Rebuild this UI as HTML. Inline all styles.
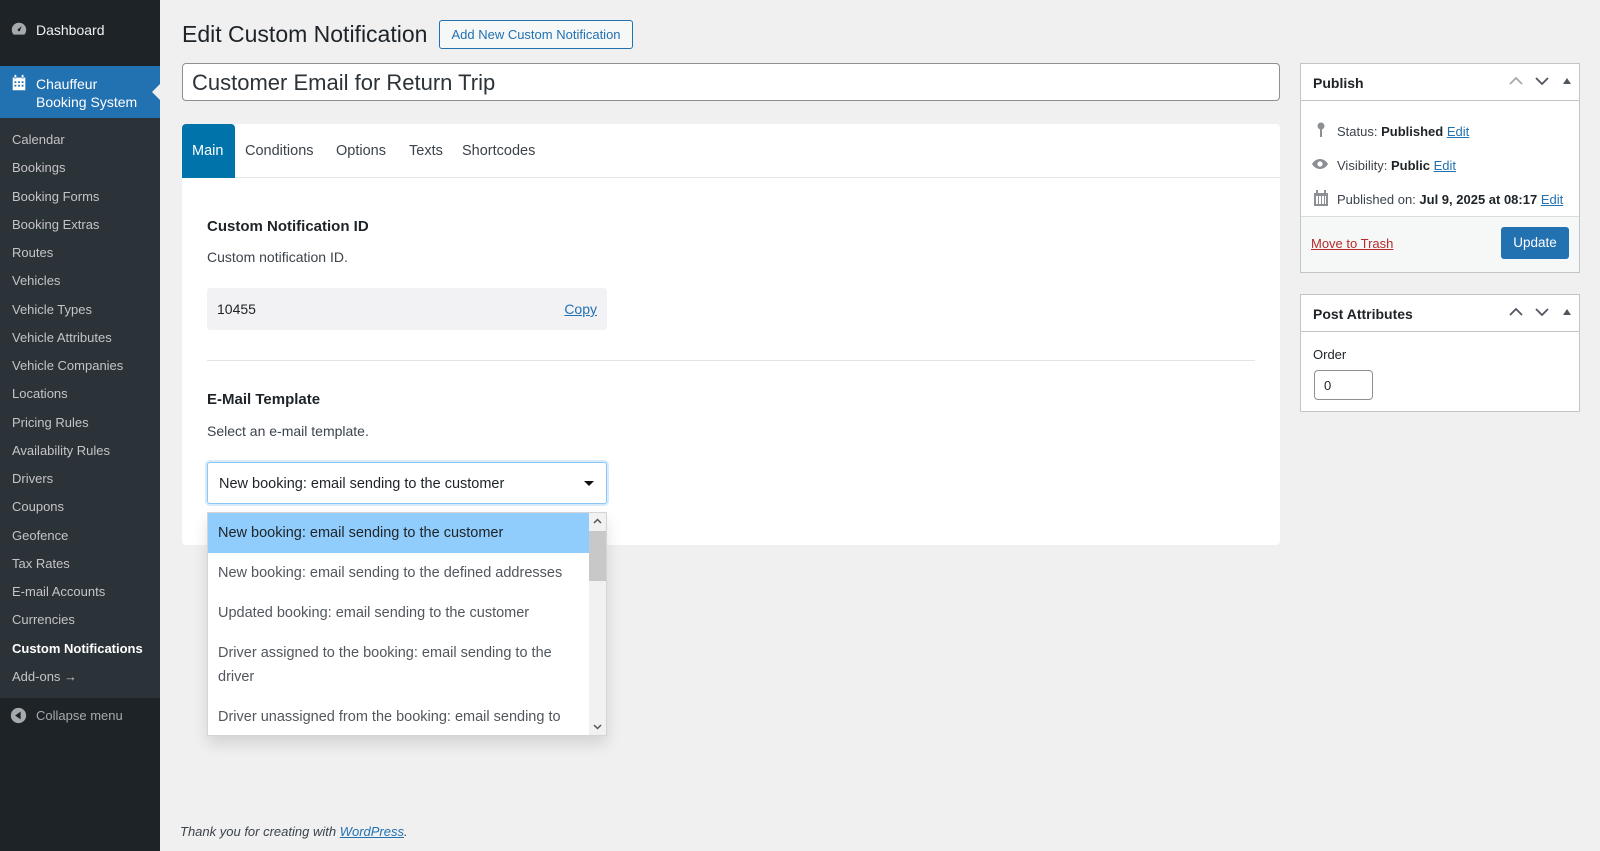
<!DOCTYPE html>
<html><head><meta charset="utf-8"><style>
*{box-sizing:border-box;margin:0;padding:0}
body{width:1600px;height:851px;background:#f0f0f1;font-family:"Liberation Sans",sans-serif;font-size:13px;color:#1d2327;position:relative;overflow:hidden}
.sb{position:absolute;left:0;top:0;width:160px;height:851px;background:#1d2327}
.dash{position:absolute;left:0;top:16px;height:28px;width:160px;color:#f0f0f1;font-size:14px}
.dash span{position:absolute;left:36px;top:6px}
.cbs{position:absolute;left:0;top:66px;width:160px;height:52px;background:#2271b1;color:#fff;font-size:14px;line-height:18px}
.cbs span{position:absolute;left:36px;top:9px}
.cbs:after{content:"";position:absolute;right:0;top:18px;border:8px solid transparent;border-right-color:#f0f0f1}
.sub{position:absolute;left:0;top:118px;width:160px;height:580px;background:#2c3338;padding-top:8px}
.sub div{height:28.26px;line-height:28px;padding-left:12px;color:#c3c4c7;font-size:13px}
.sub .cur{color:#fff;font-weight:bold}
.col{position:absolute;left:36px;top:708px;color:#a7aaad;font-size:13px}
h1{position:absolute;left:182px;top:21px;font-size:23px;font-weight:400;color:#1d2327}
.btn{position:absolute;left:439px;top:20px;width:194px;height:29px;border:1px solid #2271b1;border-radius:3px;color:#2271b1;font-size:13px;text-align:center;line-height:27px;background:#f6f7f7}
.title{position:absolute;left:182px;top:63px;width:1098px;height:38px;border:1px solid #8c8f94;border-radius:4px;background:#fff;font-size:22px;padding:6px 9px;line-height:26px;color:#2c3338}
.panel{position:absolute;left:182px;top:124px;width:1098px;height:421px;background:#fff;border-radius:4px}
.tabs{height:54px;border-bottom:1px solid #e8e8e8;position:relative;font-size:14.5px;color:#3c434a}
.tabs span{position:absolute;top:19px}
.tabs .m{left:0;top:0;width:53px;height:54px;background:#0073aa;color:#fff;border-radius:4px 4px 0 0;padding:19px 0 0 10px}
.h{position:absolute;font-size:15px;font-weight:bold;left:25px}
.d{position:absolute;font-size:14px;left:25px;color:#3c434a}
.idb{position:absolute;left:25px;top:164px;width:400px;height:42px;background:#f2f2f4;border-radius:3px;font-size:14px;padding:13px 10px}
.idb a{position:absolute;right:10px;top:13px;color:#2271b1;text-decoration:underline}
.hr{position:absolute;left:25px;top:236px;width:1048px;height:1px;background:#e4e4e4}
.sel{position:absolute;left:207px;top:462px;width:400px;height:42px;border:1px solid #8cc6f7;box-shadow:0 0 0 2px #d7ebfc;border-radius:3px;background:#fff;font-size:14.5px;padding:13px 11px}
.sel:after{content:"";position:absolute;right:12px;top:18px;border:5px solid transparent;border-top:5px solid #111;border-bottom:0}
.dd{position:absolute;left:207px;top:512px;width:400px;height:224px;background:#fff;border:1px solid #d4d4d8;box-shadow:0 8px 14px rgba(0,0,0,.12);overflow:hidden;font-size:14.5px;color:#50575e}
.dd .t{padding:0 24px 0 10px;line-height:24px}
.dd .o{height:40px;padding-top:8px}
.dd .hl{background:#90cdfc;color:#1d2327}
.sc{position:absolute;right:0;top:0;width:17px;height:222px;background:#f1f1f1}
.sc i{position:absolute;left:0;top:18px;width:17px;height:50px;background:#c8c8c8}
.box{position:absolute;left:1300px;width:280px;background:#fff;border:1px solid #c3c4c7}
.bh{height:37px;border-bottom:1px solid #c3c4c7;font-size:14px;font-weight:bold;padding:11px 12px;position:relative}
.bh svg{position:absolute;top:12px}
.row{position:absolute;left:36px;font-size:13px;color:#3c434a}
.row b{color:#1d2327}
a.l{color:#2271b1;text-decoration:underline}
.foot{position:absolute;left:180px;top:824px;font-style:italic;font-size:13px;color:#3c434a}
</style></head><body>
<div class="sb">
<div class="dash"><svg style="position:absolute;left:10px;top:4px" width="18" height="18" viewBox="0 0 20 20"><path fill="#a7aaad" d="M10 3a8 8 0 0 0-8 8c0 2 .7 3.8 2 5.2h12a8 8 0 0 0 2-5.2 8 8 0 0 0-8-8zm0 9.5a1.5 1.5 0 1 1 0-3l3-3-1.6 4.3A1.5 1.5 0 0 1 10 12.5z"/></svg><span>Dashboard</span></div>
<div class="cbs"><svg style="position:absolute;left:10px;top:8px" width="18" height="18" viewBox="0 0 20 20"><path fill="#fff" d="M3 4h14v14H3zM5 1h2v4H5zM13 1h2v4h-2zM5 8v2h2V8zm4 0v2h2V8zm4 0v2h2V8zM5 12v2h2v-2zm4 0v2h2v-2zm4 0v2h2v-2z" fill-rule="evenodd"/></svg><span>Chauffeur<br>Booking System</span></div>
<div class="sub">
<div>Calendar</div><div>Bookings</div><div>Booking Forms</div><div>Booking Extras</div><div>Routes</div><div>Vehicles</div><div>Vehicle Types</div><div>Vehicle Attributes</div><div>Vehicle Companies</div><div>Locations</div><div>Pricing Rules</div><div>Availability Rules</div><div>Drivers</div><div>Coupons</div><div>Geofence</div><div>Tax Rates</div><div>E-mail Accounts</div><div>Currencies</div><div class="cur">Custom Notifications</div><div>Add-ons →</div>
</div>
<svg style="position:absolute;left:10px;top:707px" width="17" height="17" viewBox="0 0 20 20"><circle cx="10" cy="10" r="9" fill="#a7aaad"/><path d="M12.5 5.5v9L6 10z" fill="#1d2327"/></svg>
<div class="col">Collapse menu</div>
</div>
<h1>Edit Custom Notification</h1>
<div class="btn">Add New Custom Notification</div>
<div class="title">Customer Email for Return Trip</div>
<div class="panel">
<div class="tabs"><span class="m">Main</span><span style="left:63px">Conditions</span><span style="left:154px">Options</span><span style="left:227px">Texts</span><span style="left:280px">Shortcodes</span></div>
<div class="h" style="top:94px">Custom Notification ID</div>
<div class="d" style="top:125px">Custom notification ID.</div>
<div class="idb">10455<a>Copy</a></div>
<div class="hr"></div>
<div class="h" style="top:267px">E-Mail Template</div>
<div class="d" style="top:299px">Select an e-mail template.</div>
</div>
<div class="sel">New booking: email sending to the customer</div>
<div class="dd">
<div class="t o hl">New booking: email sending to the customer</div>
<div class="t o">New booking: email sending to the defined addresses</div>
<div class="t o">Updated booking: email sending to the customer</div>
<div class="t" style="padding-top:8px;height:64px">Driver assigned to the booking: email sending to the driver</div>
<div class="t o">Driver unassigned from the booking: email sending to</div>
<div class="sc"><i></i>
<svg style="position:absolute;left:4px;top:5px" width="9" height="6" viewBox="0 0 9 6"><path d="M1 5l3.5-3.5L8 5" stroke="#555" stroke-width="1.5" fill="none"/></svg>
<svg style="position:absolute;left:4px;top:211px" width="9" height="6" viewBox="0 0 9 6"><path d="M1 1l3.5 3.5L8 1" stroke="#555" stroke-width="1.5" fill="none"/></svg>
</div>
</div>
<div class="box" style="top:63px;height:210px">
<div class="bh">Publish<svg style="right:56px" width="14" height="10" viewBox="0 0 14 10"><path d="M1 8l6-6 6 6" stroke="#a7aaad" stroke-width="1.8" fill="none"/></svg><svg style="right:30px" width="14" height="10" viewBox="0 0 14 10"><path d="M1 2l6 6 6-6" stroke="#50575e" stroke-width="1.8" fill="none"/></svg><svg style="right:8px;top:14px" width="8" height="6" viewBox="0 0 8 6"><path d="M0 6L4 0l4 6z" fill="#50575e"/></svg></div>
<svg style="position:absolute;left:14px;top:58px" width="12" height="16" viewBox="0 0 12 16"><circle cx="6" cy="4" r="3.5" fill="#8c8f94"/><rect x="5" y="6" width="2" height="9" fill="#8c8f94"/></svg>
<div class="row" style="top:60px">Status: <b>Published</b> <a class="l">Edit</a></div>
<svg style="position:absolute;left:10px;top:94px" width="18" height="12" viewBox="0 0 18 12"><path d="M9 1C5 1 2 4 1 6c1 2 4 5 8 5s7-3 8-5c-1-2-4-5-8-5z" fill="#8c8f94"/><circle cx="9" cy="6" r="2.6" fill="#fff"/></svg>
<div class="row" style="top:94px">Visibility: <b>Public</b> <a class="l">Edit</a></div>
<svg style="position:absolute;left:12px;top:126px" width="16" height="16" viewBox="0 0 16 16"><path d="M1 3h14v13H1zM3 0h2v4H3zM11 0h2v4h-2z" fill="#8c8f94"/><path d="M3 6h10v8H3z" fill="#fff"/><path d="M5 6h1v8H5zM8 6h1v8H8zM11 6h1v8h-1z" fill="#8c8f94"/></svg>
<div class="row" style="top:128px">Published on: <b>Jul 9, 2025 at 08:17</b> <a class="l">Edit</a></div>
<div style="position:absolute;left:0;top:152px;width:278px;height:56px;background:#f6f7f7;border-top:1px solid #dcdcde"></div>
<a style="position:absolute;left:10px;top:172px;color:#b32d2e;text-decoration:underline">Move to Trash</a>
<div style="position:absolute;left:200px;top:163px;width:68px;height:32px;background:#2271b1;color:#fff;border-radius:3px;text-align:center;line-height:32px;font-size:13.5px">Update</div>
</div>
<div class="box" style="top:294px;height:118px">
<div class="bh">Post Attributes<svg style="right:56px" width="14" height="10" viewBox="0 0 14 10"><path d="M1 8l6-6 6 6" stroke="#50575e" stroke-width="1.8" fill="none"/></svg><svg style="right:30px" width="14" height="10" viewBox="0 0 14 10"><path d="M1 2l6 6 6-6" stroke="#50575e" stroke-width="1.8" fill="none"/></svg><svg style="right:8px;top:14px" width="8" height="6" viewBox="0 0 8 6"><path d="M0 6L4 0l4 6z" fill="#50575e"/></svg></div>
<div style="position:absolute;left:12px;top:52px;font-size:13px">Order</div>
<div style="position:absolute;left:13px;top:75px;width:59px;height:30px;border:1px solid #8c8f94;border-radius:4px;padding:7px 9px;font-size:13px">0</div>
</div>
<div class="foot">Thank you for creating with <a class="l">WordPress</a>.</div>
</body></html>
